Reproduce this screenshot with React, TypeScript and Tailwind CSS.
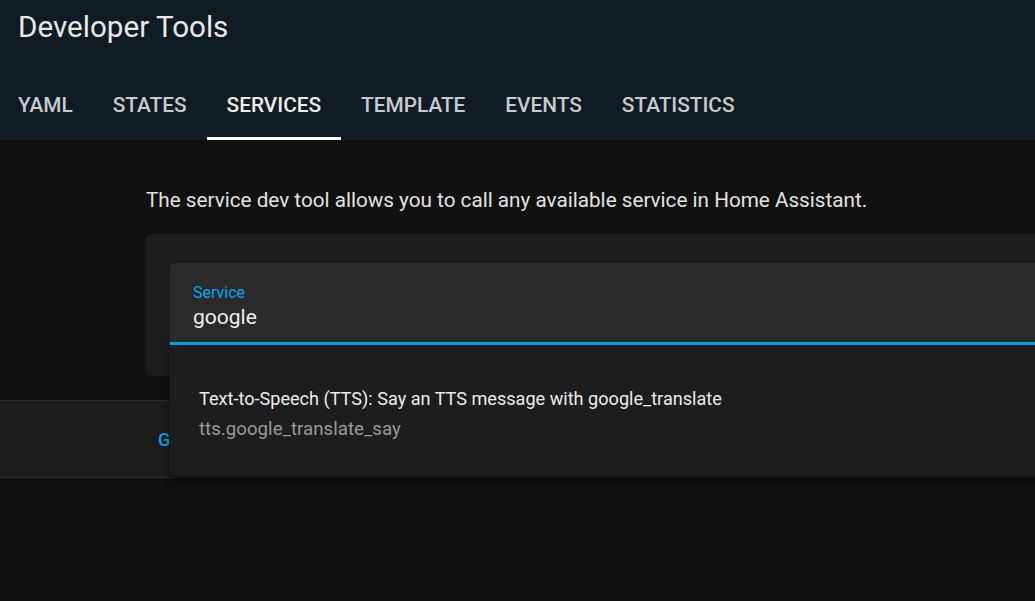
import React from "react";

const tabs = ["YAML", "STATES", "SERVICES", "TEMPLATE", "EVENTS", "STATISTICS"];

export default function App() {
  return (
    <div
      className="relative w-full h-[601px] overflow-hidden bg-[#111111] text-[#e1e1e1]"
      style={{ fontFamily: "Roboto, 'Liberation Sans', sans-serif" }}
    >
      {/* header */}
      <header className="bg-[#101c23]">
        <div className="h-[56px] flex items-center px-[18px]">
          <h1 className="text-[29.6px] font-normal text-[#e8e8e8] leading-none">Developer Tools</h1>
        </div>
        <nav className="h-[84px] flex items-end -ml-[2px]">
          {tabs.map((t) => {
            const active = t === "SERVICES";
            return (
              <div
                key={t}
                className={
                  active
                    ? "relative h-[68px] flex items-center px-[20px] text-[20.8px] font-medium text-[#ececec]"
                    : "relative h-[68px] flex items-center px-[20px] text-[20.8px] font-medium text-[#c6cbce]"
                }
              >
                {t}
                {active && <span className="absolute left-0 right-0 bottom-0 h-[3px] bg-white" />}
              </div>
            );
          })}
        </nav>
      </header>

      {/* body */}
      <main className="pt-[47px]">
        <p className="ml-[146px] text-[20.7px] leading-[26px] text-[#e1e1e1]">
          The service dev tool allows you to call any available service in Home Assistant.
        </p>

        <div className="ml-[146px] mt-[21px] w-[1000px] h-[142px] rounded-[5px] bg-[#1c1c1c] pt-[29px] pl-[24px]">
          <div className="relative">
            <div className="h-[82px] rounded-t-[5px] bg-[#2a2a2a] border-b-[3px] border-[#03a9f4] pl-[23px] pt-[21px]">
              <div className="text-[16px] leading-[18px] text-[#03a9f4]">Service</div>
              <div className="mt-[1px] text-[21px] leading-[28px] text-[#ededed]">google</div>
            </div>

            {/* suggestions menu */}
            <div className="absolute left-0 top-[82px] z-10 w-[900px] h-[131px] rounded-b-[5px] bg-[#1d1d1d] shadow-[0_4px_8px_rgba(0,0,0,0.6)] pl-[29px] pt-[42px]">
              <div className="text-[18.1px] leading-[24px] text-[#ececec]">
                Text-to-Speech (TTS): Say an TTS message with google_translate
              </div>
              <div className="mt-[6px] text-[18.7px] leading-[24px] text-[#9a9a9a]">tts.google_translate_say</div>
            </div>
          </div>
        </div>

        <div className="mt-[24px] h-[78px] bg-[#1c1c1c] border-t border-b border-[#2b2b2b] flex items-center pl-[158px]">
          <span className="text-[18px] font-medium text-[#03a9f4]">GO TO YAML MODE</span>
        </div>
      </main>
    </div>
  );
}
